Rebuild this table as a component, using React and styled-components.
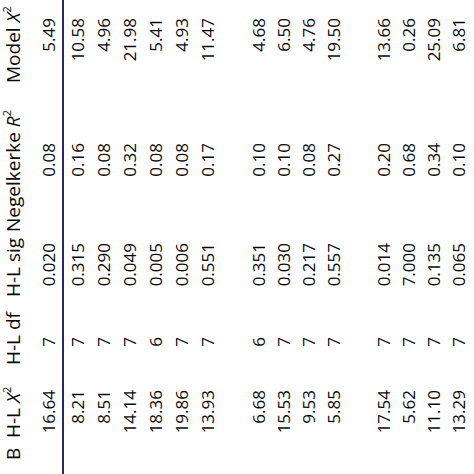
import React from 'react';
import styled, { createGlobalStyle } from 'styled-components';

const Global = createGlobalStyle`
  html, body { margin: 0; padding: 0; background: #fff; }
`;

const Page = styled.div`
  width: 474px;
  height: 474px;
  overflow: hidden;
  background: #fff;
`;

// the table is printed sideways, so the whole sheet is turned a quarter
const Sheet = styled.div`
  width: 474px;
  height: 474px;
  transform: rotate(-90deg);
  font-family: "Open Sans", "Noto Sans", sans-serif;
  font-weight: 500;
  color: #0a0a0a;
`;

const Row = styled.div`
  display: flex;
  align-items: center;
  height: ${p => p.$h}px;
  margin-top: ${p => p.$top || 0}px;
  white-space: nowrap;
`;

const Head = styled.div`
  flex: none;
  width: ${p => p.$w}px;
  padding-left: ${p => p.$pad}px;
  box-sizing: border-box;
  font-size: 19px;
  line-height: 24px;
`;

const Val = styled.div`
  flex: none;
  width: ${p => p.$w}px;
  padding-right: ${p => p.$pad}px;
  box-sizing: border-box;
  text-align: right;
  font-size: 17px;
  line-height: 24px;
`;

const Rule = styled.div`
  height: 2px;
  width: 100%;
  background: #27276f;
  margin-bottom: 1px;
`;

const Gap = styled.div`
  height: ${p => p.$h}px;
`;

const Var = styled.i`
  font-style: italic;
`;

const Sup = styled.sup`
  font-size: 11px;
  vertical-align: 9px;
  line-height: 0;
`;

const cols = [
  { w: 31, head: 14, right: 0 },
  { w: 69, head: 5, right: 16 },
  { w: 70, head: 9, right: 33 },
  { w: 70, head: 7, right: 9 },
  { w: 144, head: 2, right: 53 },
  { w: 136, head: 7, right: 64 },
];

const heads = [
  'B',
  <>H-L <Var>X</Var><Sup>2</Sup></>,
  'H-L df',
  'H-L sig',
  <>Negelkerke <Var>R</Var><Sup>2</Sup></>,
  <>Model <Var>X</Var><Sup>2</Sup></>,
];

const first = ['', '16.64', '7', '0.020', '0.08', '5.49'];

const groups = [
  {
    h: 26, before: 0, rows: [
      ['8.21', '7', '0.315', '0.16', '10.58'],
      ['8.51', '7', '0.290', '0.08', '4.96'],
      ['14.14', '7', '0.049', '0.32', '21.98'],
      ['18.36', '6', '0.005', '0.08', '5.41'],
      ['19.86', '7', '0.006', '0.08', '4.93'],
      ['13.93', '7', '0.551', '0.17', '11.47'],
    ],
  },
  {
    h: 25, before: 26, rows: [
      ['6.68', '6', '0.351', '0.10', '4.68'],
      ['15.53', '7', '0.030', '0.10', '6.50'],
      ['9.53', '7', '0.217', '0.08', '4.76'],
      ['5.85', '7', '0.557', '0.27', '19.50'],
    ],
  },
  {
    h: 25, before: 25, rows: [
      ['17.54', '7', '0.014', '0.20', '13.66'],
      ['5.62', '7', '7.000', '0.68', '0.26'],
      ['11.10', '7', '0.135', '0.34', '25.09'],
      ['13.29', '7', '0.065', '0.10', '6.81'],
    ],
  },
];

const DataRow = ({ h, top, values }) => (
  <Row $h={h} $top={top}>
    {values.map((v, i) => (
      <Val key={i} $w={cols[i].w} $pad={cols[i].right}>{v}</Val>
    ))}
  </Row>
);

export default function App() {
  return (
    <Page>
      <Global />
      <Sheet>
        <Row $h={26}>
          {heads.map((t, i) => (
            <Head key={i} $w={cols[i].w} $pad={cols[i].head}>{t}</Head>
          ))}
        </Row>
        <DataRow h={25} top={10.5} values={first} />
        <Rule />
        {groups.map((g, gi) => (
          <React.Fragment key={gi}>
            {g.before > 0 && <Gap $h={g.before} />}
            {g.rows.map((r, ri) => (
              <DataRow key={ri} h={g.h} values={['', ...r]} />
            ))}
          </React.Fragment>
        ))}
      </Sheet>
    </Page>
  );
}
